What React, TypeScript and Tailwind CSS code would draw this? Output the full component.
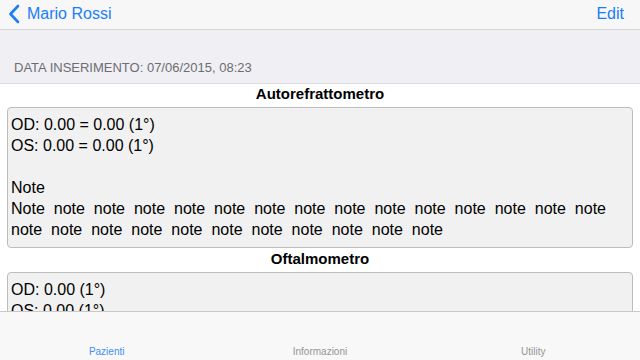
import React from "react";

const notes =
  "Note note note note note note note note note note note note note note note note note note note note note note note note note note";

const App = () => {
  return (
    <div className="w-[640px] h-[360px] flex flex-col overflow-hidden bg-white font-['Liberation_Sans',Arial,sans-serif]">
      {/* Nav bar */}
      <div className="h-[30px] shrink-0 flex items-center justify-between bg-[#f7f7f7] border-b border-[#d6d6d9] pl-[8px] pr-[16px]">
        <div className="flex items-center gap-[7px] text-[#1a7ef9]">
          <svg width="12" height="20" viewBox="0 0 12 20" className="-mt-[1px]">
            <polyline
              points="10,2 2.5,10 10,18"
              fill="none"
              stroke="#1a7ef9"
              strokeWidth="2.6"
              strokeLinecap="round"
              strokeLinejoin="round"
            />
          </svg>
          <span className="text-[16px] leading-none -mt-[1px]">Mario Rossi</span>
        </div>
        <span className="text-[16px] leading-none text-[#1a7ef9] -mt-[1px]">Edit</span>
      </div>

      {/* Content */}
      <div className="flex-1 overflow-hidden">
        <div className="h-[54px] bg-[#efeff4] border-b border-[#dcdce0] flex items-end pl-[14px] pb-[9px]">
          <span className="text-[13px] leading-none text-[#6d6d72]">
            DATA INSERIMENTO: 07/06/2015, 08:23
          </span>
        </div>

        <div className="h-[23px] flex items-center justify-center">
          <span className="text-[15px] font-bold text-black -mt-[3px]">Autorefrattometro</span>
        </div>
        <div className="mx-[7px] bg-[#f1f1f1] border border-[#bdbdbd] rounded-[4px] pl-[3px] pt-[6px] pb-[7px] text-[16px] leading-[21px] text-black">
          <div>OD: 0.00 = 0.00 (1°)</div>
          <div>OS: 0.00 = 0.00 (1°)</div>
          <div>&nbsp;</div>
          <div>Note</div>
          <div className="[word-spacing:4.5px]">{notes}</div>
        </div>

        <div className="h-[24px] flex items-center justify-center">
          <span className="text-[15px] font-bold text-black -mt-[1px]">Oftalmometro</span>
        </div>
        <div className="mx-[7px] bg-[#f1f1f1] border border-[#bdbdbd] rounded-[4px] pl-[3px] pt-[6px] pb-[7px] text-[16px] leading-[21px] text-black">
          <div>OD: 0.00 (1°)</div>
          <div>OS: 0.00 (1°)</div>
        </div>
      </div>

      {/* Tab bar */}
      <div className="h-[49px] shrink-0 grid grid-cols-3 bg-[#f8f8f8] border-t border-[#c9c9c9]">
        <div className="flex items-end justify-center pb-[1px] text-[10px] text-[#3d8ff5]">Pazienti</div>
        <div className="flex items-end justify-center pb-[1px] text-[10px] text-[#959595]">Informazioni</div>
        <div className="flex items-end justify-center pb-[1px] text-[10px] text-[#959595]">Utility</div>
      </div>
    </div>
  );
};

export default App;
